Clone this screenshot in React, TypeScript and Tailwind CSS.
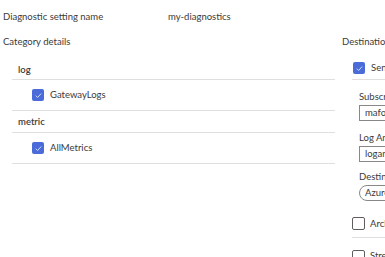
import React from 'react';

const font = { fontFamily: 'Lato, "Noto Sans", sans-serif' };

const Check = ({ checked }: { checked?: boolean }) =>
  checked ? (
    <span className="flex h-[12px] w-[12px] shrink-0 items-center justify-center rounded-[2px] bg-[#4a6bd8]">
      <svg width="9" height="9" viewBox="0 0 10 10" fill="none">
        <path d="M2 5.2l2 2 4-4.4" stroke="#dfe6fb" strokeWidth="1" />
      </svg>
    </span>
  ) : (
    <span className="h-[13px] w-[13px] shrink-0 rounded-[2px] border border-[#605e5c] bg-white" />
  );

export default function App() {
  return (
    <div
      className="relative h-[257px] w-[385px] overflow-hidden bg-white text-[9.5px] leading-[14px] text-[#3b3a39]"
      style={font}
    >
      {/* clipped link line at top */}
      <div className="-mt-[12px] flex h-[14px] gap-[60px] pl-[8px] text-[#0078d4]">
        <span>Diagnostic settings</span>
        <span>Diagnostic setting</span>
      </div>

      <div className="mt-[5px] flex h-[20px] items-center">
        <span className="w-[168px] pl-[3px]">Diagnostic setting name</span>
        <span>my-diagnostics</span>
      </div>

      <div className="mt-[5px] flex">
        {/* left column */}
        <div className="w-[335px] shrink-0">
          <div className="flex h-[20px] items-center pl-[3px]">Category details</div>
          <div className="ml-[12px] mt-[9px]">
            <div className="flex h-[19px] items-center border-b border-[#e1dfdd] pl-[6px] font-semibold">log</div>
            <div className="flex h-[31px] items-center gap-[6px] border-b border-[#e1dfdd] pl-[20px]">
              <Check checked />
              <span>GatewayLogs</span>
            </div>
            <div className="flex h-[22px] items-center border-b border-[#e1dfdd] pl-[6px] font-semibold">metric</div>
            <div className="flex h-[31px] items-center gap-[6px] border-b border-[#e1dfdd] pl-[20px]">
              <Check checked />
              <span>AllMetrics</span>
            </div>
          </div>
        </div>

        {/* right column */}
        <div className="ml-[7px] flex-1 whitespace-nowrap">
          <div className="flex h-[20px] items-center">Destination details</div>
          <div className="ml-[10px]">
            <div className="mt-[6px] flex h-[22px] items-center gap-[6px] border-b border-[#e1dfdd] pb-[1px] pl-[1px]">
              <Check checked />
              <span>Send to Log Analytics workspace</span>
            </div>
            <div className="pl-[7px]">
              <div className="mt-[10px] flex h-[14px] items-center">Subscription</div>
              <div className="mt-[1px] flex h-[16px] items-center border border-[#8a8886] pl-[5px]">mafox-subscription</div>
              <div className="mt-[10px] flex h-[14px] items-center">Log Analytics workspace</div>
              <div className="mt-[1px] flex h-[16px] items-center border border-[#8a8886] pl-[5px]">loganalytics-workspace</div>
              <div className="mt-[8px] flex h-[14px] items-center">Destination table</div>
              <div className="mt-[1px] flex h-[16px] items-center rounded-full border border-[#8a8886] pl-[5px]">Azure diagnostics</div>
            </div>
            <div className="mt-[12px] flex h-[25px] items-center gap-[5px] border-b border-[#e1dfdd] pb-[3px]">
              <Check />
              <span>Archive to a storage account</span>
            </div>
            <div className="mt-[11px] flex items-center gap-[5px]">
              <Check />
              <span>Stream to an event hub</span>
            </div>
          </div>
        </div>
      </div>
    </div>
  );
}
